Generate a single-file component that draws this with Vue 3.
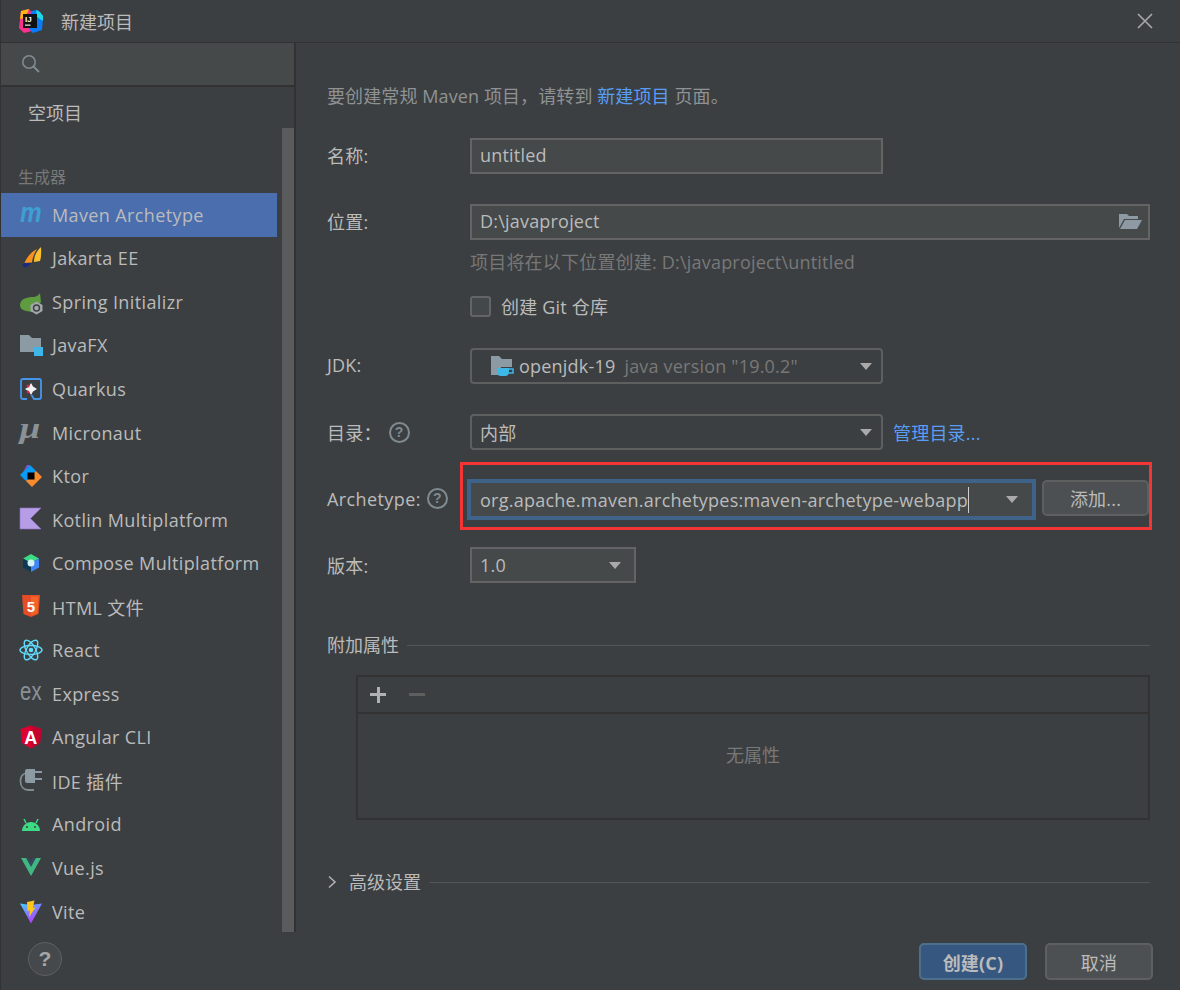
<script setup>
const generators = [
  { name: "Maven Archetype", icon: "maven", selected: true },
  { name: "Jakarta EE", icon: "jakarta" },
  { name: "Spring Initializr", icon: "spring" },
  { name: "JavaFX", icon: "javafx" },
  { name: "Quarkus", icon: "quarkus" },
  { name: "Micronaut", icon: "micronaut" },
  { name: "Ktor", icon: "ktor" },
  { name: "Kotlin Multiplatform", icon: "kotlin" },
  { name: "Compose Multiplatform", icon: "compose" },
  { name: "HTML 文件", icon: "html" },
  { name: "React", icon: "react" },
  { name: "Express", icon: "express" },
  { name: "Angular CLI", icon: "angular" },
  { name: "IDE 插件", icon: "plugin" },
  { name: "Android", icon: "android" },
  { name: "Vue.js", icon: "vue" },
  { name: "Vite", icon: "vite" },
];
</script>

<template>
  <div class="app">
    <header class="titlebar">
      <svg class="logo" viewBox="0 0 24 24" width="24" height="24">
        <path d="M2 2 L10 0 L13 4 L13 22 L5 24 L0 19 Z" fill="#fc318c" />
        <path d="M2 2 L10 0 L6 9 L1 10 Z" fill="#fdb60d" />
        <path d="M12 2 L19 1 L24 7 L23 21 L14 24 L10 20 Z" fill="#087cfa" />
        <path d="M17 1 L21 3 L24 7 L24 12 L18 8 Z" fill="#21d7e0" />
        <rect x="4" y="5" width="14" height="14" fill="#111" />
        <text x="6" y="12.500" class="logo-text">IJ</text>
        <rect x="6" y="15.500" width="5.500" height="1.300" fill="#ddd" />
      </svg>
      <span class="title">新建项目</span>
      <svg class="close" viewBox="0 0 16 16" width="16" height="16">
        <path d="M1 1 L15 15 M15 1 L1 15" stroke="#a9a9a9" stroke-width="1.6" />
      </svg>
    </header>

    <div class="body">
      <aside class="side">
        <div class="side-top">
          <div class="search">
            <svg viewBox="0 0 20 20" width="20" height="20">
              <circle cx="8" cy="8" r="6.2" fill="none" stroke="#7f8b91" stroke-width="1.6" />
              <path d="M12.5 12.5 L18 18" stroke="#7f8b91" stroke-width="2" />
            </svg>
          </div>
          <div class="list-wrap">
            <div class="empty-item">空项目</div>
            <div class="group-label">生成器</div>
            <ul class="gen-list">
              <li v-for="g in generators" :key="g.name" class="gen" :class="{ selected: g.selected }">
                <svg class="gen-icon" viewBox="0 0 24 24" width="24" height="24">
                  <template v-if="g.icon === 'maven'">
                    <text x="1" y="19" class="i-maven" textLength="22" lengthAdjust="spacingAndGlyphs">m</text>
                  </template>
                  <template v-else-if="g.icon === 'jakarta'">
                    <path d="M3 20 L6 16.500 L13 17 L7 21.500 Z" fill="#1b2a80" />
                    <path d="M5.500 17 C8 11 12 6 18 3 C15 8 13.500 12 13 16.500 Z" fill="#f7931e" />
                    <path d="M15 16 C15 10 17.500 5 22 1 C22.500 7 22 12 21 15 Z" fill="#fbc02d" />
                  </template>
                  <template v-else-if="g.icon === 'spring'">
                    <path d="M1 15 C1 9 8 7 14 7 C17 7 20 5 21 3 L22 12 L13 22 C6 21 1 20 1 15 Z" fill="#5f9b3f" />
                    <path d="M17.500 11.500 L23.500 15 L23.500 21 L17.500 24.500 L11.500 21 L11.500 15 Z" fill="#a2a7ab" />
                    <circle cx="17.500" cy="18" r="3" fill="none" stroke="#3c3f41" stroke-width="1.400" />
                  </template>
                  <template v-else-if="g.icon === 'javafx'">
                    <path d="M1 2 H10 L13 5 H22 V14 H15 V19 H1 Z" fill="#8c9aa3" />
                    <rect x="15" y="14" width="9" height="9" fill="#3fb6e8" />
                  </template>
                  <template v-else-if="g.icon === 'quarkus'">
                    <path d="M8 22 H4 Q2 22 2 20 V4 Q2 2 4 2 H20 Q22 2 22 4 V20 Q22 22 20 22 H15 L12.500 18" fill="none" stroke="#4695eb" stroke-width="1.800" />
                    <path d="M12 6 L14 9.500 L18 12 L14 14.500 L12 18 L10 14.500 L6 12 L10 9.500 Z" fill="#f2f2f2" />
                    <circle cx="9" cy="9" r="1.500" fill="#d8264b" />
                    <circle cx="9" cy="15" r="1.300" fill="#d8264b" />
                  </template>
                  <template v-else-if="g.icon === 'micronaut'">
                    <text x="0" y="16.500" class="i-micronaut" textLength="22" lengthAdjust="spacingAndGlyphs">µ</text>
                  </template>
                  <template v-else-if="g.icon === 'ktor'">
                    <path d="M11 1 L1 11 L7 17 L17 7 Z" fill="#0a9bf5" />
                    <path d="M17 7 L7 17 L13 23 L23 13 Z" fill="#f68c2e" />
                    <path d="M4 8 L11 1 L8 1 Z" fill="#7b5bd6" />
                    <rect x="8.500" y="8.500" width="7" height="7" fill="#000" />
                  </template>
                  <template v-else-if="g.icon === 'kotlin'">
                    <path d="M1 0 H22 L11.500 10.500 L22 21 H1 Z" fill="#b79ce8" stroke="#8e73c0" stroke-width="0.600" />
                  </template>
                  <template v-else-if="g.icon === 'compose'">
                    <path d="M12 3 L20 7.500 L12 12 L4 7.500 Z" fill="#3ddc84" />
                    <path d="M4 7.500 L12 12 L12 21 L4 16.500 Z" fill="#0d3a52" />
                    <path d="M20 7.500 L12 12 L12 21 L20 16.500 Z" fill="#4285f4" />
                    <circle cx="12" cy="12" r="3.500" fill="#d3f3fb" />
                  </template>
                  <template v-else-if="g.icon === 'html'">
                    <path d="M3 0 H21 L19.500 19 L12 22 L4.500 19 Z" fill="#e44d26" />
                    <path d="M12 1.500 H19.500 L18.300 18 L12 20.500 Z" fill="#f16529" />
                    <text x="12" y="17" class="i-html">5</text>
                  </template>
                  <template v-else-if="g.icon === 'react'">
                    <g fill="none" stroke="#61dafb" stroke-width="1.400">
                      <ellipse cx="12" cy="12" rx="11" ry="4.500" />
                      <ellipse cx="12" cy="12" rx="11" ry="4.500" transform="rotate(60 12 12)" />
                      <ellipse cx="12" cy="12" rx="11" ry="4.500" transform="rotate(120 12 12)" />
                    </g>
                    <circle cx="12" cy="12" r="2.300" fill="#61dafb" />
                  </template>
                  <template v-else-if="g.icon === 'express'">
                    <text x="1" y="18" class="i-express" textLength="22" lengthAdjust="spacingAndGlyphs">ex</text>
                  </template>
                  <template v-else-if="g.icon === 'angular'">
                    <path d="M12 0.500 L22.500 4 L21 18 L12 23.500 L3 18 L1.500 4 Z" fill="#dd0031" />
                    <path d="M12 0.500 L22.500 4 L21 18 L12 23.500 Z" fill="#c3002f" />
                    <text x="12" y="19" class="i-angular">A</text>
                  </template>
                  <template v-else-if="g.icon === 'plugin'">
                    <path d="M7 4 C3 5 1.500 8 1.500 12 C1.500 18 5 21 9 21 H15" fill="none" stroke="#7f8b91" stroke-width="1.800" />
                    <path d="M8 0 H16 V14 H8 Q6 14 6 12 V2 Q6 0 8 0 Z" fill="#8c9aa3" />
                    <path d="M16 3 H23 M16 10 H23" stroke="#8c9aa3" stroke-width="2" />
                  </template>
                  <template v-else-if="g.icon === 'android'">
                    <path d="M3 19 C3 14 7 10 12 10 C17 10 21 14 21 19 Z" fill="#3ddc84" />
                    <path d="M7 11 L5 7 M17 11 L19 7" stroke="#3ddc84" stroke-width="1.400" />
                    <circle cx="8" cy="15" r="1" fill="#3c3f41" />
                    <circle cx="16" cy="15" r="1" fill="#3c3f41" />
                  </template>
                  <template v-else-if="g.icon === 'vue'">
                    <path d="M2 2 H9 L12 7.500 L15 2 H22 L12 20 Z" fill="#41b883" />
                    <path d="M7 2 H10 L12 5.500 L14 2 H17 L12 11 Z" fill="#34495e" />
                  </template>
                  <template v-else-if="g.icon === 'vite'">
                    <defs>
                      <linearGradient id="vite-g" x1="0" y1="0" x2="0.600" y2="1">
                        <stop offset="0" stop-color="#41d1ff" />
                        <stop offset="1" stop-color="#bd34fe" />
                      </linearGradient>
                    </defs>
                    <path d="M1 3.500 L12 5 L23 3.500 L12 23.500 Z" fill="url(#vite-g)" />
                    <path d="M15.500 0.500 L8 2 L8.500 11 L11 10.500 L10 17 L16.500 7.500 L13.800 8 Z" fill="#ffc517" />
                  </template>
                </svg>
                <span>{{ g.name }}</span>
              </li>
            </ul>
            <div class="scroll-thumb"></div>
          </div>
        </div>
        <div class="side-foot">
          <span class="side-help">?</span>
        </div>
      </aside>

      <main class="main">
        <p class="intro">要创建常规 Maven 项目，请转到 <a class="link">新建项目</a> 页面。</p>

        <div class="row">
          <label class="lbl up">名称:</label>
          <div class="field w-short up">untitled</div>
        </div>

        <div class="row gap">
          <label class="lbl up">位置:</label>
          <div class="field w-full up">
            <span>D:\javaproject</span>
            <svg class="folder" viewBox="0 0 24 18" width="24" height="18">
              <path d="M1 2 H9 L11 4 H20 V7 H6 L1 16 Z" fill="#8e9aa3" />
              <path d="M7 8 H24 L19 17 H2 Z" fill="#8e9aa3" />
            </svg>
          </div>
        </div>
        <div class="hint">项目将在以下位置创建: D:\javaproject\untitled</div>
        <div class="check-row">
          <span class="check"></span>
          <span>创建 Git 仓库</span>
        </div>

        <div class="row gap">
          <label class="lbl up">JDK:</label>
          <div class="combo w-short">
            <svg class="jdk-icon" viewBox="0 0 24 22" width="24" height="22">
              <path d="M1 1 H9 L12 4 H22 V12 H11 V20 H1 Z" fill="#8c9aa3" />
              <path d="M7 13 H19 V17 Q19 21 15 21 H11 Q7 21 7 17 Z" fill="#3fb6e8" />
              <path d="M19 14 H23 V18 H19" fill="none" stroke="#3fb6e8" stroke-width="1.500" />
            </svg>
            <span>openjdk-19</span>
            <span class="muted">java version "19.0.2"</span>
            <i class="arrow"></i>
          </div>
        </div>

        <div class="row gap">
          <label class="lbl lbl-help">目录：<span class="help catalog-help">?</span></label>
          <div class="combo w-short">
            <span>内部</span>
            <i class="arrow"></i>
          </div>
          <a class="link manage">管理目录...</a>
        </div>

        <div class="row gap arch-row">
          <label class="lbl lbl-help"><span class="arch-label">Archetype:</span><span class="help arch-help">?</span></label>
          <div class="arch-input">
            <span class="caret">org.apache.maven.archetypes:maven-archetype-webapp</span>
            <i class="arrow"></i>
          </div>
          <button class="btn add">添加...</button>
          <div class="red-box"></div>
        </div>

        <div class="row version-row">
          <label class="lbl">版本:</label>
          <div class="field w-version">
            <span>1.0</span>
            <i class="arrow"></i>
          </div>
        </div>

        <div class="section props-title">
          <span>附加属性</span>
          <span class="rule"></span>
        </div>
        <div class="table">
          <div class="toolbar">
            <span class="plus"></span>
            <span class="minus"></span>
          </div>
          <div class="table-empty">无属性</div>
        </div>

        <div class="section adv-title">
          <svg viewBox="0 0 10 14" width="10" height="14">
            <path d="M2 1.500 L8 7 L2 12.500" fill="none" stroke="#aeb0b2" stroke-width="1.600" />
          </svg>
          <span>高级设置</span>
          <span class="rule"></span>
        </div>

        <div class="footer">
          <button class="btn primary">创建(C)</button>
          <button class="btn cancel">取消</button>
        </div>
      </main>
    </div>
  </div>
</template>

<style>
html,
body {
  margin: 0;
  background: #3c3f41;
}
</style>

<style scoped>
.app {
  width: 1180px;
  height: 990px;
  overflow: hidden;
  display: flex;
  flex-direction: column;
  background: #3c3f41;
  color: #bbbbbb;
  font-family: "Open Sans", "Noto Sans CJK SC", sans-serif;
  font-size: 18px;
  letter-spacing: 0.2px;
  box-sizing: border-box;
  border-left: 1px solid #323232;
}
.titlebar {
  height: 42px;
  flex: none;
  display: flex;
  align-items: center;
  padding: 0 27px 0 18px;
  border-bottom: 1px solid #323232;
  letter-spacing: 0;
}
.logo-text {
  font: bold 8px "Liberation Sans", sans-serif;
  fill: #fff;
}
.title {
  margin-left: 18px;
}
.close {
  margin-left: auto;
}
.body {
  flex: 1;
  display: flex;
  min-height: 0;
}
.side {
  width: 295px;
  flex: none;
  display: flex;
  flex-direction: column;
}
.side-top {
  height: 889px;
  display: flex;
  flex-direction: column;
  border-right: 2px solid #323232;
  box-sizing: border-box;
}
.search {
  height: 44px;
  flex: none;
  box-sizing: border-box;
  background: #45494a;
  border-bottom: 2px solid #323232;
  display: flex;
  align-items: center;
  padding-left: 20px;
}
.list-wrap {
  position: relative;
  flex: 1;
  min-height: 0;
}
.empty-item {
  height: 52px;
  line-height: 52px;
  padding-left: 27px;
  letter-spacing: 0;
}
.group-label {
  margin-top: 27px;
  height: 22px;
  line-height: 22px;
  padding-left: 17px;
  font-size: 16px;
  letter-spacing: 0;
  color: #787878;
}
.gen-list {
  list-style: none;
  margin: 5px 0 0;
  padding: 0;
  width: 276px;
}
.gen {
  height: 43.55px;
  display: flex;
  align-items: center;
  padding-left: 18px;
  white-space: nowrap;
  letter-spacing: 0.38px;
}
.gen.selected {
  background: #4b6eaf;
}
.gen-icon {
  flex: none;
  margin-right: 9px;
  overflow: visible;
}
.i-maven {
  font: italic bold 28px "Liberation Sans", sans-serif;
  fill: #3f9fd0;
}
.i-micronaut {
  font: italic bold 30px "Liberation Serif", serif;
  fill: #8a9297;
}
.i-html {
  font: bold 15px "Liberation Sans", sans-serif;
  fill: #fff;
  text-anchor: middle;
}
.i-express {
  font: 25px "Liberation Sans", sans-serif;
  fill: #8a9297;
}
.i-angular {
  font: bold 18px "Liberation Sans", sans-serif;
  fill: #fff;
  text-anchor: middle;
}
.scroll-thumb {
  position: absolute;
  left: 281px;
  top: 41px;
  width: 12px;
  bottom: 0;
  background: #5a5b5d;
}
.side-foot {
  flex: 1;
  padding: 10px 0 0 27px;
}
.side-help {
  width: 32px;
  height: 32px;
  border: 1px solid #5e6060;
  border-radius: 50%;
  background: #46494b;
  display: flex;
  align-items: center;
  justify-content: center;
  font: bold 21px "Liberation Sans", sans-serif;
  color: #a4a6a8;
}
.main {
  flex: 1;
  min-width: 0;
  padding: 40px 30px 0 31px;
  display: flex;
  flex-direction: column;
}
.intro {
  margin: 0 0 29px;
  height: 26px;
  line-height: 26px;
  color: #8f9294;
  letter-spacing: 0.1px;
}
.link {
  color: #589df6;
}
.row {
  display: flex;
  align-items: center;
  height: 36px;
  flex: none;
}
.row.gap {
  margin-top: 30px;
}
.lbl {
  width: 143px;
  flex: none;
}
.lbl.up {
  margin-top: -2px;
}
.lbl-help {
  display: flex;
  align-items: center;
}
.field,
.combo {
  height: 36px;
  box-sizing: border-box;
  display: flex;
  align-items: center;
  padding: 0 9px 0 8px;
  background: #45494a;
  border: 2px solid #646464;
}
.field.up {
  padding-bottom: 2px;
}
.combo {
  background: #3c3f41;
  border-radius: 4px;
  border-color: #5e6060;
}
.w-short {
  width: 413px;
}
.w-full {
  width: 680px;
}
.w-version {
  width: 166px;
}
.folder {
  margin-left: auto;
  margin-right: -3px;
}
.hint {
  margin: 10px 0 0 143px;
  height: 24px;
  line-height: 24px;
  color: #787878;
}
.check-row {
  margin: 20px 0 0 143px;
  height: 24px;
  display: flex;
  align-items: center;
  gap: 10px;
}
.check {
  width: 21px;
  height: 21px;
  box-sizing: border-box;
  border: 2px solid #646464;
  border-radius: 3px;
  background: #43494a;
}
.jdk-icon {
  margin: 0 5px 0 10px;
}
.muted {
  color: #787878;
  margin-left: 9px;
}
.arrow {
  margin-left: auto;
  width: 0;
  height: 0;
  border-left: 6px solid transparent;
  border-right: 6px solid transparent;
  border-top: 7px solid #aaaaaa;
}
.field .arrow {
  margin-right: 4px;
}
.help {
  width: 21px;
  height: 21px;
  box-sizing: border-box;
  border: 2px solid #7f8b91;
  border-radius: 50%;
  display: flex;
  align-items: center;
  justify-content: center;
  font: bold 14px "Liberation Sans", sans-serif;
  color: #7f8b91;
}
.catalog-help {
  margin-left: 7px;
}
.arch-label {
  letter-spacing: 0.4px;
}
.arch-help {
  margin: -2px 0 0 6px;
}
.manage {
  margin-left: 10px;
}
.arch-row {
  position: relative;
  align-items: flex-start;
}
.arch-row .lbl {
  height: 36px;
  margin-top: 1px;
}
.arch-input {
  margin: 3px 0 0 1px;
  width: 561px;
  height: 33px;
  box-sizing: border-box;
  display: flex;
  align-items: center;
  padding-left: 9px;
  background: #45494a;
  box-shadow: 0 0 0 4px #3f6289;
  white-space: nowrap;
  letter-spacing: 0.24px;
}
.caret {
  border-right: 1px solid #d0d0d0;
  line-height: 26px;
}
.arch-input .arrow {
  margin-right: 14px;
}
.btn {
  box-sizing: border-box;
  height: 36px;
  border: 2px solid #5e6060;
  border-radius: 5px;
  background: #4c5052;
  color: #bbbbbb;
  font: inherit;
  letter-spacing: inherit;
  padding: 0;
}
.add {
  width: 107px;
  margin-left: 10px;
}
.red-box {
  position: absolute;
  left: 133px;
  top: -18px;
  width: 692px;
  height: 68px;
  box-sizing: border-box;
  border: 3px solid #f33535;
  pointer-events: none;
}
.version-row {
  margin-top: 31px;
}
.section {
  height: 26px;
  line-height: 26px;
  display: flex;
  align-items: center;
  flex: none;
  letter-spacing: 0;
}
.rule {
  flex: 1;
  height: 1px;
  background: #535557;
  margin-left: 8px;
}
.props-title {
  margin-top: 49px;
}
.table {
  margin: 17px 0 0 29px;
  height: 145px;
  box-sizing: border-box;
  border: 2px solid #323232;
  display: flex;
  flex-direction: column;
  flex: none;
}
.toolbar {
  height: 37px;
  flex: none;
  box-sizing: border-box;
  border-bottom: 2px solid #323232;
  display: flex;
  align-items: center;
  gap: 23px;
  padding-left: 12px;
}
.plus {
  width: 16px;
  height: 16px;
  background:
    linear-gradient(#afb1b3, #afb1b3) center / 16px 3px no-repeat,
    linear-gradient(#afb1b3, #afb1b3) center / 3px 16px no-repeat;
}
.minus {
  width: 16px;
  height: 3px;
  background: #5e6060;
}
.table-empty {
  flex: 1;
  display: flex;
  align-items: center;
  justify-content: center;
  color: #787878;
  padding-bottom: 24px;
  letter-spacing: 0;
}
.adv-title {
  margin-top: 49px;
}
.adv-title svg {
  margin-right: 12px;
  flex: none;
}
.footer {
  display: flex;
  justify-content: flex-end;
  gap: 18px;
  margin: 48px -3px 0 0;
}
.footer .btn {
  width: 108px;
  height: 37px;
}
.primary {
  background: #365880;
  border-color: #4c708c;
  font-weight: 700;
}
</style>
